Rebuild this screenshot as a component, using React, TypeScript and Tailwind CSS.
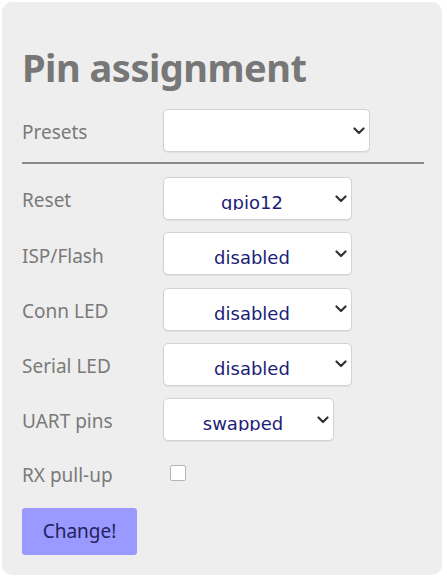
import React from 'react';

const Chevron = () => (
  <svg className="w-[12px] h-[8px] text-[#333]" viewBox="0 0 12 8" fill="none" stroke="currentColor">
    <path d="M1.5 1.5L6 6l4.5-4.5" strokeWidth={2.2} strokeLinecap="round" strokeLinejoin="round" />
  </svg>
);

function FakeSelect({ value, width }: { value?: string; width: string }) {
  return (
    <div
      className={`relative h-[43px] ${width} rounded-[5px] border border-[#d2d2d2] bg-white shadow-[0_1px_1px_rgba(0,0,0,0.06)]`}
    >
      {value && (
        <div className="mt-[16px] h-[16px] overflow-hidden pl-[2px] pr-[13px] text-center font-['DejaVu_Sans',sans-serif] text-[18px] leading-[18px] text-[#1d1d78]">
          {value}
        </div>
      )}
      <div className="absolute right-[4px] top-1/2 -translate-y-1/2">
        <Chevron />
      </div>
    </div>
  );
}

const Label = ({ children }: { children: React.ReactNode }) => (
  <div className="mt-[4px] w-[141px] shrink-0 text-[19px] text-[#7a7a7a]">{children}</div>
);

export default function App() {
  const rows = [
    { label: 'Reset', value: 'gpio12', width: 'w-[189px]' },
    { label: 'ISP/Flash', value: 'disabled', width: 'w-[189px]' },
    { label: 'Conn LED', value: 'disabled', width: 'w-[189px]' },
    { label: 'Serial LED', value: 'disabled', width: 'w-[189px]' },
    { label: 'UART pins', value: 'swapped', width: 'w-[171px]' },
  ];

  return (
    <div className="min-h-screen bg-white p-[2px] font-['Noto_Sans',sans-serif]">
      <div className="h-[573px] w-[440px] rounded-[10px] bg-[#eeeeee] px-[20px] pt-[46px]">
        <h1 className="text-[38px] font-bold leading-none tracking-[-0.5px] text-[#777]">Pin assignment</h1>

        <div className="mt-[23px] flex items-center">
          <Label>Presets</Label>
          <FakeSelect width="w-[207px]" />
        </div>

        <div className="mt-[10px] h-[2px] w-[402px] bg-[#8a8a8a]" />

        <div className="mt-[13px] flex flex-col gap-[12.25px]">
          {rows.map((r) => (
            <div key={r.label} className="flex items-center">
              <Label>{r.label}</Label>
              <FakeSelect value={r.value} width={r.width} />
            </div>
          ))}
        </div>

        <div className="mt-[21px] flex h-[22px] items-center">
          <Label>RX pull-up</Label>
          <input
            type="checkbox"
            className="ml-[7px] h-[16px] w-[16px] appearance-none rounded-[2px] border border-[#b5b5b5] bg-white"
          />
        </div>

        <button className="mt-[24px] h-[47px] w-[115px] rounded-[3px] bg-[#9999ff] text-[19px] text-[#22225e]">
          Change!
        </button>
      </div>
    </div>
  );
}
